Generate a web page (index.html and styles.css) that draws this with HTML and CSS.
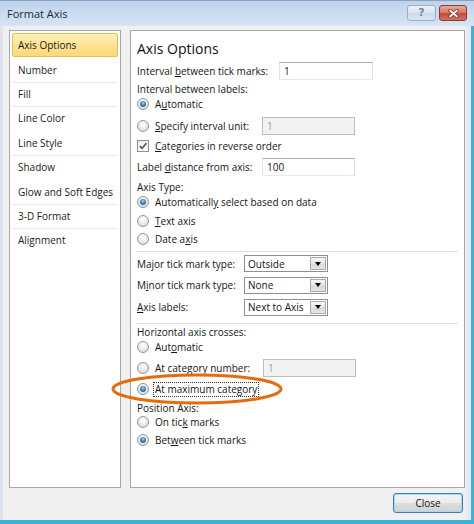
FILE: index.html
```html
<!DOCTYPE html>
<html>
<head>
<meta charset="utf-8">
<title>Format Axis</title>
<link rel="stylesheet" href="styles.css">
</head>
<body>
<div class="window">
  <div class="titlebar">
    <span class="title">Format Axis</span>
    <div class="caption">
      <span class="cbtn help">?</span>
      <span class="cbtn close"><svg width="11" height="9" viewBox="0 0 11 9"><path d="M2 1.5 L9 7.5 M9 1.5 L2 7.5" stroke="#7a2e24" stroke-width="3.4" stroke-linecap="round"/><path d="M2 1.5 L9 7.5 M9 1.5 L2 7.5" stroke="#fff" stroke-width="1.8" stroke-linecap="round"/></svg></span>
    </div>
  </div>
  <div class="lower">
    <div class="client">
      <div class="panes">
        <ul class="nav">
          <li class="active">Axis Options</li>
          <li>Number</li>
          <li class="grp">Fill</li>
          <li class="grp">Line Color</li>
          <li>Line Style</li>
          <li class="grp">Shadow</li>
          <li>Glow and Soft Edges</li>
          <li class="grp">3-D Format</li>
          <li class="grp">Alignment</li>
        </ul>
        <div class="content">
          <h1>Axis Options</h1>
          <div class="row mid"><span class="lbl w142">Interval <u>b</u>etween tick marks:</span><span class="field w94">1</span></div>
          <div class="row mid"><span>Interval between labels:</span></div>
          <div class="row tight"><span class="radio on"></span><span>A<u>u</u>tomatic</span></div>
          <div class="row wide"><span class="radio"></span><span class="lbl w107"><u>S</u>pecify interval unit:</span><span class="field off">1</span></div>
          <div class="row"><span class="check"><svg width="10" height="10" viewBox="0 0 10 10"><path d="M1.8 5 L4 7.4 L8.4 2.2" fill="none" stroke="#3e5173" stroke-width="1.6"/></svg></span><span><u>C</u>ategories in reverse order</span></div>
          <div class="row"><span class="lbl w125">Label <u>d</u>istance from axis:</span><span class="field">100</span></div>
          <div class="row"><span>Axis Type:</span></div>
          <div class="row tight"><span class="radio on"></span><span>Automaticall<u>y</u> select based on data</span></div>
          <div class="row mid"><span class="radio"></span><span><u>T</u>ext axis</span></div>
          <div class="row mid"><span class="radio"></span><span>Date a<u>x</u>is</span></div>
          <div class="sep"></div>
          <div class="row flush"><span class="lbl w107">Ma<u>j</u>or tick mark type:</span><span class="select"><span class="val">Outside</span><span class="drop"></span></span></div>
          <div class="row wide"><span class="lbl w107">M<u>i</u>nor tick mark type:</span><span class="select"><span class="val">None</span><span class="drop"></span></span></div>
          <div class="row wide"><span class="lbl w107"><u>A</u>xis labels:</span><span class="select"><span class="val">Next to Axis</span><span class="drop"></span></span></div>
          <div class="sep late"></div>
          <div class="row flush"><span>Horizontal axis crosses:</span></div>
          <div class="row tight"><span class="radio"></span><span>Aut<u>o</u>matic</span></div>
          <div class="row"><span class="radio"></span><span class="lbl w108">At cate<u>g</u>ory number:</span><span class="field off">1</span></div>
          <div class="row wide"><span class="radio on"></span><span class="focus">At maximum category</span></div>
          <div class="row mid"><span>Position Axis:</span></div>
          <div class="row flush"><span class="radio"></span><span>On tic<u>k</u> marks</span></div>
          <div class="row mid"><span class="radio on"></span><span>Bet<u>w</u>een tick marks</span></div>
        </div>
      </div>
      <div class="footer"><button class="btn">Close</button></div>
    </div>
  </div>
  <svg class="annot" width="178" height="36" viewBox="0 0 178 36"><ellipse cx="89" cy="18" rx="84" ry="14" fill="none" stroke="#e46c0a" stroke-width="3"/></svg>
</div>
</body>
</html>
```

FILE: styles.css
```css
* { box-sizing: border-box; }
html, body { margin: 0; padding: 0; }
body {
  width: 474px;
  height: 524px;
  overflow: hidden;
  font-family: "Open Sans", "Noto Sans", sans-serif;
  font-size: 10px;
  color: #141414;
  background: #f0f0f0;
}
.window {
  position: relative;
  width: 474px;
  height: 524px;
  display: flex;
  flex-direction: column;
}

/* title bar */
.titlebar {
  height: 26px;
  flex: none;
  display: flex;
  align-items: flex-start;
  padding: 0 7px;
  border-top: 1px solid #8ea2bb;
  background: linear-gradient(#bed3eb, #d6e4f4);
}
.title {
  margin-top: 5px;
  font-size: 11px;
  line-height: 16px;
  color: #1b2b40;
}
.caption {
  margin-left: auto;
  margin-top: 4px;
  display: flex;
  gap: 3px;
}
.cbtn {
  height: 16px;
  border-radius: 3px;
  display: flex;
  align-items: center;
  justify-content: center;
}
.help {
  width: 29px;
  border: 1px solid #97adc8;
  background: linear-gradient(#edf3fa, #d6e2f0 50%, #cad9eb 51%, #dbe6f3);
  color: #7487a0;
  font-weight: bold;
  font-size: 11px;
  line-height: 14px;
  font-family: "DejaVu Sans", sans-serif;
}
.close {
  width: 28px;
  border: 1px solid #8c3a2f;
  background: linear-gradient(#eaa999, #d9745f 50%, #c44a36 51%, #d5705c);
}

/* frame + client */
.lower {
  flex: 1;
  display: flex;
  border-right: 3px solid #3cb3d8;
  border-bottom: 4px solid #3cb3d8;
}
.client {
  flex: 1;
  display: flex;
  flex-direction: column;
  border-left: 3px solid #dbe4f0;
  border-right: 5px solid #e5eaf2;
  background: #f0f0f0;
  padding: 4px 1px 0 6px;
}
.panes {
  display: flex;
  gap: 9px;
  height: 458px;
}

/* navigation list */
.nav {
  width: 112px;
  margin: 0;
  padding: 2px;
  list-style: none;
  background: #fff;
  border: 1px solid #a7a7a7;
}
.nav li {
  height: 24.4px;
  display: flex;
  align-items: center;
  padding-left: 5px;
  border: 1px solid transparent;
  white-space: nowrap;
  color: #1a1a1a;
}
.nav li.grp { border-top-color: #e8e8e8; }
.nav li.active {
  border: 1px solid #e2bd58;
  border-radius: 2px;
  background: linear-gradient(#fff0b8, #fee497 45%, #fdd977);
}

/* options pane */
.content {
  width: 335px;
  background: #fff;
  border: 1px solid #a7a7a7;
  padding: 7px 6px 0 6px;
}
h1 {
  margin: 0;
  height: 21px;
  font-size: 14px;
  line-height: 21px;
  font-weight: normal;
  color: #111;
}
.row {
  height: 14px;
  display: flex;
  align-items: center;
  white-space: nowrap;
  margin-top: 6.5px;
}
.row.flush { margin-top: 0; }
.row.tight { margin-top: 1px; }
.row.mid { margin-top: 4.5px; }
.row.wide { margin-top: 7.7px; }
u { text-decoration: underline; text-underline-offset: 1px; }

.lbl { flex: none; }
.w142 { width: 142px; }
.w125 { width: 125px; }
.w107 { width: 107px; }
.w108 { width: 108px; }

.field {
  flex: none;
  width: 93px;
  height: 18px;
  padding-left: 4px;
  display: flex;
  align-items: center;
  background: #fff;
  border: 1px solid;
  border-color: #abadb3 #dbdfe6 #e3e9ef #e2e3ea;
}
.field.w94 { width: 94px; }
.field.off {
  background: #f2f2f2;
  border-color: #bdbdbd;
  color: #9c9c9c;
}

.radio {
  flex: none;
  width: 12px;
  height: 12px;
  margin-right: 6px;
  border-radius: 50%;
  border: 1px solid #979797;
  background: radial-gradient(circle at 50% 35%, #ffffff, #e6e6e6 60%, #cdcdcd);
  display: flex;
  align-items: center;
  justify-content: center;
}
.radio.on::after {
  content: "";
  width: 6px;
  height: 6px;
  border-radius: 50%;
  background: radial-gradient(circle at 50% 35%, #9fd6f6 0, #3b86c2 45%, #1b4a78 100%);
}
.check {
  flex: none;
  width: 12px;
  height: 12px;
  margin-right: 6px;
  border: 1px solid #8e8f8f;
  background: linear-gradient(#e9e9e9, #ffffff);
  display: flex;
  align-items: center;
  justify-content: center;
}

.select {
  flex: none;
  width: 84px;
  height: 17px;
  display: flex;
  align-items: stretch;
  background: #fff;
  border: 1px solid #8e8f8f;
}
.select .val {
  flex: 1;
  padding-left: 3px;
  display: flex;
  align-items: center;
}
.select .drop {
  width: 16px;
  margin: 1px;
  border: 1px solid #a9a9a9;
  background: linear-gradient(#f7f7f7, #e3e3e3 50%, #d6d6d6 51%, #e6e6e6);
  display: flex;
  align-items: center;
  justify-content: center;
}
.select .drop::after {
  content: "";
  border-left: 3.5px solid transparent;
  border-right: 3.5px solid transparent;
  border-top: 4px solid #000;
}

.sep {
  height: 1px;
  background: #dcdfe3;
  margin: 4.5px 0 5px;
}
.sep.late { margin: 8.7px 0 1.5px; }

.focus {
  outline: 1px dotted #333;
  outline-offset: 0;
  padding: 0 1px;
  margin-left: -1px;
  line-height: 13px;
}

/* footer */
.footer {
  display: flex;
  justify-content: flex-end;
  padding: 5px 2px 0 0;
}
.btn {
  width: 70px;
  height: 20px;
  padding: 0;
  font-family: "Open Sans", "Noto Sans", sans-serif;
  font-size: 10px;
  color: #111;
  border: 1px solid #3c7fb1;
  border-radius: 3px;
  background: linear-gradient(#f4f4f4, #ececec 50%, #dedede 51%, #d2d2d2);
  box-shadow: inset 0 0 0 1px #9fdcf6;
}

/* annotation */
.annot {
  position: absolute;
  left: 108px;
  top: 371px;
}
```
